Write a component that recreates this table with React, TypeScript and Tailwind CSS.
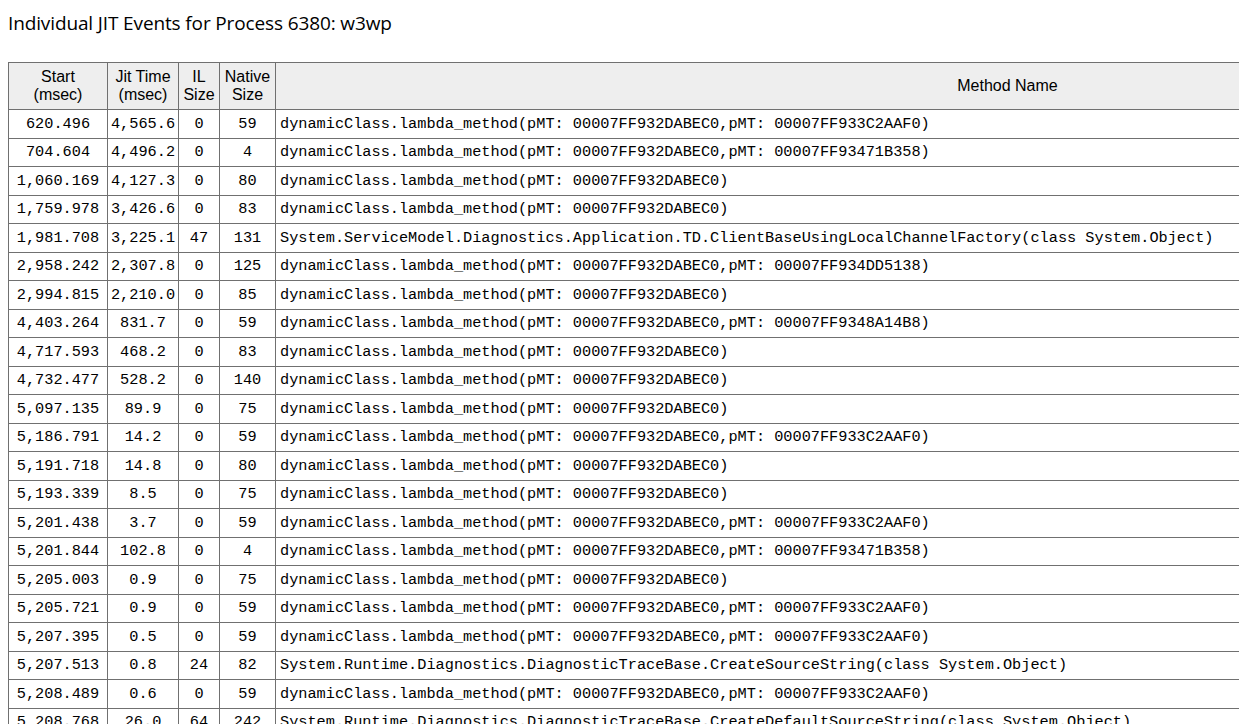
import React from 'react';

type JitRow = [string, string, string, string, string];

const A = '00007FF932DABEC0';

const rows: JitRow[] = [
  ['620.496', '4,565.6', '0', '59', `dynamicClass.lambda_method(pMT: ${A},pMT: 00007FF933C2AAF0)`],
  ['704.604', '4,496.2', '0', '4', `dynamicClass.lambda_method(pMT: ${A},pMT: 00007FF93471B358)`],
  ['1,060.169', '4,127.3', '0', '80', `dynamicClass.lambda_method(pMT: ${A})`],
  ['1,759.978', '3,426.6', '0', '83', `dynamicClass.lambda_method(pMT: ${A})`],
  ['1,981.708', '3,225.1', '47', '131', 'System.ServiceModel.Diagnostics.Application.TD.ClientBaseUsingLocalChannelFactory(class System.Object)'],
  ['2,958.242', '2,307.8', '0', '125', `dynamicClass.lambda_method(pMT: ${A},pMT: 00007FF934DD5138)`],
  ['2,994.815', '2,210.0', '0', '85', `dynamicClass.lambda_method(pMT: ${A})`],
  ['4,403.264', '831.7', '0', '59', `dynamicClass.lambda_method(pMT: ${A},pMT: 00007FF9348A14B8)`],
  ['4,717.593', '468.2', '0', '83', `dynamicClass.lambda_method(pMT: ${A})`],
  ['4,732.477', '528.2', '0', '140', `dynamicClass.lambda_method(pMT: ${A})`],
  ['5,097.135', '89.9', '0', '75', `dynamicClass.lambda_method(pMT: ${A})`],
  ['5,186.791', '14.2', '0', '59', `dynamicClass.lambda_method(pMT: ${A},pMT: 00007FF933C2AAF0)`],
  ['5,191.718', '14.8', '0', '80', `dynamicClass.lambda_method(pMT: ${A})`],
  ['5,193.339', '8.5', '0', '75', `dynamicClass.lambda_method(pMT: ${A})`],
  ['5,201.438', '3.7', '0', '59', `dynamicClass.lambda_method(pMT: ${A},pMT: 00007FF933C2AAF0)`],
  ['5,201.844', '102.8', '0', '4', `dynamicClass.lambda_method(pMT: ${A},pMT: 00007FF93471B358)`],
  ['5,205.003', '0.9', '0', '75', `dynamicClass.lambda_method(pMT: ${A})`],
  ['5,205.721', '0.9', '0', '59', `dynamicClass.lambda_method(pMT: ${A},pMT: 00007FF933C2AAF0)`],
  ['5,207.395', '0.5', '0', '59', `dynamicClass.lambda_method(pMT: ${A},pMT: 00007FF933C2AAF0)`],
  ['5,207.513', '0.8', '24', '82', 'System.Runtime.Diagnostics.DiagnosticTraceBase.CreateSourceString(class System.Object)'],
  ['5,208.489', '0.6', '0', '59', `dynamicClass.lambda_method(pMT: ${A},pMT: 00007FF933C2AAF0)`],
  ['5,208.768', '26.0', '64', '242', 'System.Runtime.Diagnostics.DiagnosticTraceBase.CreateDefaultSourceString(class System.Object)'],
  ['5,210.114', '1.2', '0', '59', `dynamicClass.lambda_method(pMT: ${A})`],
];

const th = 'border border-[#707070] bg-[#eeeeee] font-normal text-center align-middle px-0 py-0';
const td = 'border border-[#707070] px-0 py-0 whitespace-nowrap';

export default function App() {
  return (
    <div className="w-screen h-screen overflow-hidden bg-white text-black">
      <h1 className="pl-[8px] pt-[11px] h-[62px] text-[19px] leading-[24px] font-normal font-['Open_Sans','Noto_Sans',sans-serif] tracking-[-0.13px]">
        Individual JIT Events for Process 6380: w3wp
      </h1>
      <table className="ml-[8px] table-fixed border-collapse w-[1732px]">
        <colgroup>
          <col className="w-[99px]" />
          <col className="w-[71px]" />
          <col className="w-[41px]" />
          <col className="w-[56px]" />
          <col />
        </colgroup>
        <thead>
          <tr className="h-[47px] font-['Liberation_Sans',Arial,sans-serif] text-[16px] leading-[18px]">
            <th className={th}>Start<br />(msec)</th>
            <th className={th}>Jit Time<br />(msec)</th>
            <th className={th}>IL<br />Size</th>
            <th className={th}>Native<br />Size</th>
            <th className={th}>Method Name</th>
          </tr>
        </thead>
        <tbody className="font-['Liberation_Mono','DejaVu_Sans_Mono',monospace] text-[15.25px] leading-[18px]">
          {rows.map((r, i) => (
            <tr key={i} className="h-[28.5px]">
              <td className={`${td} text-center`}>{r[0]}</td>
              <td className={`${td} text-center`}>{r[1]}</td>
              <td className={`${td} text-center`}>{r[2]}</td>
              <td className={`${td} text-center`}>{r[3]}</td>
              <td className={`${td} text-left pl-[4px]`}>{r[4]}</td>
            </tr>
          ))}
        </tbody>
      </table>
    </div>
  );
}
